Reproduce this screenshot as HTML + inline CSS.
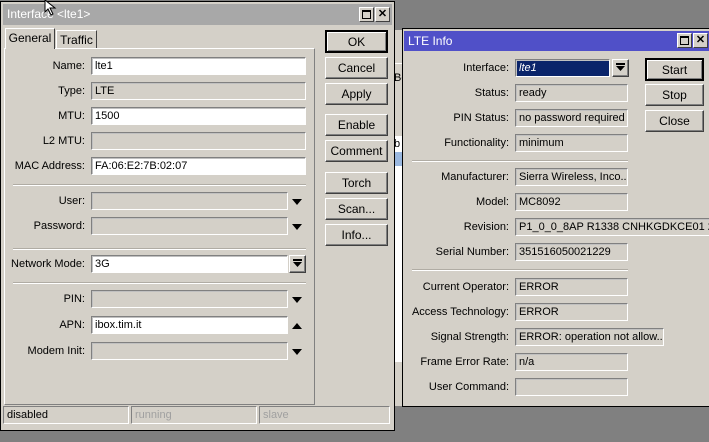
<!DOCTYPE html><html><head><style>
*{box-sizing:border-box;margin:0;padding:0}
body{width:709px;height:442px;background:#808080;position:relative;overflow:hidden;font-family:"Liberation Sans",sans-serif;font-size:11px;color:#000}
.a{position:absolute}
.win{position:absolute;background:#d4d0c8;border:1px solid #000}
.lab{position:absolute;text-align:right;white-space:nowrap;line-height:18px}
.f{position:absolute;height:18px;border:1px solid #808080;border-right-color:#fff;border-bottom-color:#fff;box-shadow:inset 1px 1px 0 #c0c0c0;padding-left:3px;line-height:16px;white-space:nowrap;overflow:hidden}
.w{background:#fff}
.btn{position:absolute;border:1px solid;border-color:#fff #404040 #404040 #fff;box-shadow:inset -1px -1px 0 #808080;text-align:center;line-height:20px;font-size:12px}
.sep{position:absolute;height:2px;border-top:1px solid #b0aca4;border-bottom:1px solid #fff}
.tri{position:absolute;width:0;height:0;border-left:5px solid transparent;border-right:5px solid transparent}
.tb{position:absolute;width:15px;height:15px;background:#d4d0c8;border:1px solid;border-color:#fff #404040 #404040 #fff}
.dd svg{position:absolute;left:3px;top:3px}
</style></head><body>
<div class="a" style="left:394px;top:30px;width:12px;height:376px;background:#d4d0c8"></div>
<div class="a" style="left:394px;top:63px;width:12px;height:1px;background:#fff"></div>
<div class="a" style="left:394px;top:72px;font-size:11px">Bc</div>
<div class="a" style="left:394px;top:136px;width:12px;height:226px;background:#fff"></div>
<div class="a" style="left:394px;top:136px;font-size:11px;line-height:16px">b</div>
<div class="a" style="left:394px;top:152px;width:10px;height:14px;background:#9ab8e0"></div>

<div class="win" style="left:0;top:1px;width:395px;height:430px">
<div class="a" style="left:2px;top:2px;width:389px;height:21px;background:#a8a8a8;color:#fff;font-size:12px;line-height:21px;padding-left:4px">Interface &lt;lte1&gt;</div>
<div class="tb" style="left:358px;top:5px"><div class="a" style="left:2px;top:2px;width:9px;height:9px;border:1px solid #000;border-top-width:2px"></div></div>
<div class="tb" style="left:374px;top:5px;font-size:11px;line-height:12px;text-align:center;font-weight:bold">✕</div>
<div class="a" style="left:4px;top:26px;width:50px;height:21px;border:1px solid;border-color:#fff #404040 transparent #fff;border-bottom:none;line-height:18px;text-align:center;font-size:12px;z-index:2;background:#d4d0c8">General</div>
<div class="a" style="left:55px;top:28px;width:41px;height:19px;border:1px solid;border-color:#fff #404040 transparent #fff;border-bottom:none;line-height:18px;text-align:center;font-size:12px">Traffic</div>
<div class="a" style="left:3px;top:46px;width:311px;height:357px;border:1px solid;border-color:#fff #808080 #808080 #fff"></div>

<div class="lab" style="left:0;width:84px;top:55px">Name:</div><div class="f w" style="left:90px;top:55px;width:215px">lte1</div>
<div class="lab" style="left:0;width:84px;top:80px">Type:</div><div class="f" style="left:90px;top:80px;width:215px">LTE</div>
<div class="lab" style="left:0;width:84px;top:105px">MTU:</div><div class="f w" style="left:90px;top:105px;width:215px">1500</div>
<div class="lab" style="left:0;width:84px;top:130px">L2 MTU:</div><div class="f" style="left:90px;top:130px;width:215px"></div>
<div class="lab" style="left:0;width:84px;top:155px">MAC Address:</div><div class="f w" style="left:90px;top:155px;width:215px">FA:06:E2:7B:02:07</div>
<div class="sep" style="left:12px;top:182px;width:293px"></div>
<div class="lab" style="left:0;width:84px;top:190px">User:</div><div class="f" style="left:90px;top:190px;width:197px"></div><div class="tri" style="left:291px;top:197px;border-top:6px solid #000"></div>
<div class="lab" style="left:0;width:84px;top:215px">Password:</div><div class="f" style="left:90px;top:215px;width:197px"></div><div class="tri" style="left:291px;top:222px;border-top:6px solid #000"></div>
<div class="sep" style="left:12px;top:246px;width:293px"></div>
<div class="lab" style="left:0;width:84px;top:253px">Network Mode:</div><div class="f w" style="left:90px;top:253px;width:197px">3G</div>
<div class="btn dd" style="left:288px;top:253px;width:17px;height:18px"><svg width="9" height="10"><rect x="0" y="0" width="9" height="2"/><path d="M0 3 H9 L4.5 8 Z"/></svg></div>
<div class="sep" style="left:12px;top:280px;width:293px"></div>
<div class="lab" style="left:0;width:84px;top:288px">PIN:</div><div class="f" style="left:90px;top:288px;width:197px"></div><div class="tri" style="left:291px;top:295px;border-top:6px solid #000"></div>
<div class="lab" style="left:0;width:84px;top:314px">APN:</div><div class="f w" style="left:90px;top:314px;width:197px">ibox.tim.it</div><div class="tri" style="left:291px;top:321px;border-bottom:6px solid #000"></div>
<div class="lab" style="left:0;width:84px;top:340px">Modem Init:</div><div class="f" style="left:90px;top:340px;width:197px"></div><div class="tri" style="left:291px;top:347px;border-top:6px solid #000"></div>

<div class="btn" style="left:324px;top:28px;width:63px;height:23px;border:2px solid #000;box-shadow:inset 1px 1px 0 #fff,inset -1px -1px 0 #808080">OK</div>
<div class="btn" style="left:324px;top:55px;width:63px;height:22px">Cancel</div>
<div class="btn" style="left:324px;top:81px;width:63px;height:22px">Apply</div>
<div class="btn" style="left:324px;top:112px;width:63px;height:22px">Enable</div>
<div class="btn" style="left:324px;top:138px;width:63px;height:22px">Comment</div>
<div class="btn" style="left:324px;top:170px;width:63px;height:22px">Torch</div>
<div class="btn" style="left:324px;top:196px;width:63px;height:22px">Scan...</div>
<div class="btn" style="left:324px;top:222px;width:63px;height:22px">Info...</div>

<div class="f" style="left:2px;top:404px;width:126px;box-shadow:none">disabled</div>
<div class="f" style="left:130px;top:404px;width:126px;box-shadow:none;color:#a0a0a0">running</div>
<div class="f" style="left:258px;top:404px;width:131px;box-shadow:none;color:#a0a0a0">slave</div>
</div>

<div class="win" style="left:402px;top:28px;width:310px;height:379px">
<div class="a" style="left:1px;top:2px;width:306px;height:20px;background:#5050c8;color:#fff;font-size:12px;line-height:20px;padding-left:4px">LTE Info</div>
<div class="tb" style="left:274px;top:4px"><div class="a" style="left:2px;top:2px;width:9px;height:9px;border:1px solid #000;border-top-width:2px"></div></div>
<div class="tb" style="left:290px;top:4px;font-size:11px;line-height:12px;text-align:center;font-weight:bold">✕</div>
<div class="lab" style="left:0;width:106px;top:30px">Interface:</div>
<div class="f" style="left:112px;top:30px;width:95px;background:#0a246a;color:#fff;font-style:italic">lte1</div>
<div class="btn dd" style="left:209px;top:30px;width:17px;height:18px"><svg width="9" height="10"><rect x="0" y="0" width="9" height="2"/><path d="M0 3 H9 L4.5 8 Z"/></svg></div>
<div class="lab" style="left:0;width:106px;top:55px">Status:</div><div class="f" style="left:112px;top:55px;width:113px">ready</div>
<div class="lab" style="left:0;width:106px;top:80px">PIN Status:</div><div class="f" style="left:112px;top:80px;width:113px">no password required</div>
<div class="lab" style="left:0;width:106px;top:105px">Functionality:</div><div class="f" style="left:112px;top:105px;width:113px">minimum</div>
<div class="sep" style="left:9px;top:131px;width:216px"></div>
<div class="lab" style="left:0;width:106px;top:139px">Manufacturer:</div><div class="f" style="left:112px;top:139px;width:113px">Sierra Wireless, Inco...</div>
<div class="lab" style="left:0;width:106px;top:164px">Model:</div><div class="f" style="left:112px;top:164px;width:113px">MC8092</div>
<div class="lab" style="left:0;width:106px;top:189px">Revision:</div><div class="f" style="left:112px;top:189px;width:200px;border-right:none">P1_0_0_8AP R1338 CNHKGDKCE01 20</div>
<div class="lab" style="left:0;width:106px;top:214px">Serial Number:</div><div class="f" style="left:112px;top:214px;width:113px">351516050021229</div>
<div class="sep" style="left:9px;top:240px;width:216px"></div>
<div class="lab" style="left:0;width:106px;top:249px">Current Operator:</div><div class="f" style="left:112px;top:249px;width:113px">ERROR</div>
<div class="lab" style="left:0;width:106px;top:274px">Access Technology:</div><div class="f" style="left:112px;top:274px;width:113px">ERROR</div>
<div class="lab" style="left:0;width:106px;top:299px">Signal Strength:</div><div class="f" style="left:112px;top:299px;width:149px">ERROR: operation not allow..</div>
<div class="lab" style="left:0;width:106px;top:324px">Frame Error Rate:</div><div class="f" style="left:112px;top:324px;width:113px">n/a</div>
<div class="lab" style="left:0;width:106px;top:349px">User Command:</div><div class="f" style="left:112px;top:349px;width:113px"></div>
<div class="btn" style="left:242px;top:29px;width:59px;height:23px;border:2px solid #000;box-shadow:inset 1px 1px 0 #fff,inset -1px -1px 0 #808080">Start</div>
<div class="btn" style="left:242px;top:55px;width:59px;height:22px">Stop</div>
<div class="btn" style="left:242px;top:81px;width:59px;height:22px">Close</div>
</div>
<svg class="a" style="left:44px;top:0" width="14" height="16"><path d="M1 0 L1 12 L4 9 L7 15 L9 14 L6 8 L11 8 Z" fill="#fff" stroke="#000"/></svg>
</body></html>
